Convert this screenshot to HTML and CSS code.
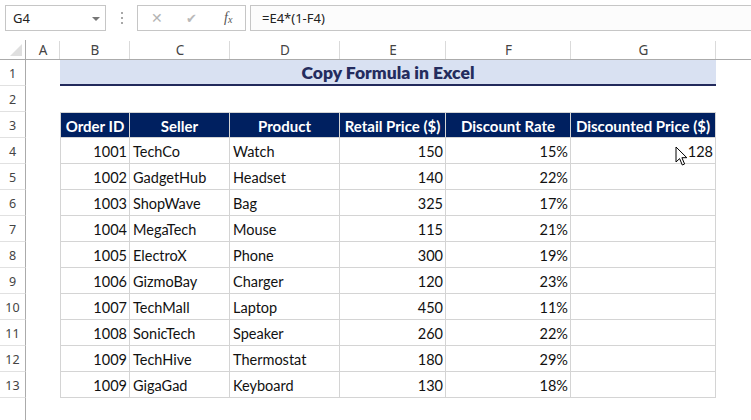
FILE: index.html
```html
<!DOCTYPE html>
<html lang="en">
<head>
    <meta charset="UTF-8">
    <title>Copy Formula in Excel</title>
    <link rel="stylesheet" href="styles.css">
</head>
<body>
    <div class="formula-bar">
        <div class="name-box">
            <span>G4</span>
            <span class="caret"></span>
        </div>
        <div class="grip"><i></i><i></i><i></i></div>
        <div class="fx-buttons">
            <span class="btn-x">&#x2715;</span>
            <span class="btn-ok">&#x2714;</span>
            <span class="btn-fx">f<sub>x</sub></span>
        </div>
        <div class="formula-input">=E4*(1-F4)</div>
    </div>

    <div class="sheet">
        <!-- column headings -->
        <div class="corner"><span class="tri"></span></div>
        <div class="col-head">A</div>
        <div class="col-head">B</div>
        <div class="col-head">C</div>
        <div class="col-head">D</div>
        <div class="col-head">E</div>
        <div class="col-head">F</div>
        <div class="col-head">G</div>
        <div class="col-head last"></div>

        <!-- row 1 -->
        <div class="row-head">1</div>
        <div class="blank"></div>
        <div class="title">Copy Formula in Excel</div>
        <div class="blank"></div>

        <!-- row 2 -->
        <div class="row-head">2</div>
        <div class="blank span-all"></div>

        <!-- row 3 -->
        <div class="row-head">3</div>
        <div class="blank"></div>
        <div class="th first">Order ID</div>
        <div class="th">Seller</div>
        <div class="th">Product</div>
        <div class="th">Retail Price ($)</div>
        <div class="th">Discount Rate</div>
        <div class="th">Discounted Price ($)</div>
        <div class="blank"></div>
    </div>

    <svg class="pointer" width="14" height="21" viewBox="0 0 14 21">
        <path d="M1 1 L1 16 L4.6 12.6 L7.3 19 L9.6 18 L6.9 11.7 L11.8 11.7 Z" fill="#fff" stroke="#000" stroke-width="1" stroke-linejoin="miter"/>
    </svg>

    <script src="sheet.js"></script>
</body>
</html>
```

FILE: sheet.js
```js
// isi baris data (baris 4 - 13)
const orders = [
    [1001, 'TechCo', 'Watch', 150, '15%', 128],
    [1002, 'GadgetHub', 'Headset', 140, '22%', ''],
    [1003, 'ShopWave', 'Bag', 325, '17%', ''],
    [1004, 'MegaTech', 'Mouse', 115, '21%', ''],
    [1005, 'ElectroX', 'Phone', 300, '19%', ''],
    [1006, 'GizmoBay', 'Charger', 120, '23%', ''],
    [1007, 'TechMall', 'Laptop', 450, '11%', ''],
    [1008, 'SonicTech', 'Speaker', 260, '22%', ''],
    [1009, 'TechHive', 'Thermostat', 180, '29%', ''],
    [1009, 'GigaGad', 'Keyboard', 130, '18%', '']
];

const sheet = document.querySelector('.sheet');

function cell(cls, text) {
    const div = document.createElement('div');
    div.className = cls;
    div.textContent = text;
    sheet.appendChild(div);
}

orders.forEach((row, i) => {
    cell('row-head', i + 4);
    cell('blank', '');
    cell('td first num', row[0]);
    cell('td', row[1]);
    cell('td', row[2]);
    cell('td num', row[3]);
    cell('td num', row[4]);
    cell('td num', row[5]);
    cell('blank', '');
});

cell('row-head tail', '');
cell('blank span-all', '');
```

FILE: styles.css
```css
* {
    margin: 0;
    padding: 0;
    box-sizing: border-box;
}

body {
    background: #fff;
    width: 751px;
    height: 420px;
    overflow: hidden;
    position: relative;
    font-family: 'Lato', 'Liberation Sans', sans-serif;
}

/* ---------- formula bar ---------- */
.formula-bar {
    height: 40px;
    padding-top: 5px;
    display: flex;
    align-items: flex-start;
}

.name-box {
    margin-left: 5px;
    width: 101px;
    height: 26px;
    border: 1px solid #c6c6c6;
    display: flex;
    align-items: center;
    justify-content: space-between;
    padding: 0 5px 0 7px;
    font-family: 'Noto Sans', sans-serif;
    font-size: 13px;
    color: #222;
}

.caret {
    width: 0;
    height: 0;
    border-left: 4px solid transparent;
    border-right: 4px solid transparent;
    border-top: 4px solid #777;
    margin-top: 1px;
}

.grip {
    width: 31px;
    height: 26px;
    display: flex;
    flex-direction: column;
    align-items: center;
    justify-content: center;
    gap: 3px;
}

.grip i {
    display: block;
    width: 2px;
    height: 2px;
    background: #a8a8a8;
}

.fx-buttons {
    width: 109px;
    height: 26px;
    border: 1px solid #c6c6c6;
    display: flex;
    align-items: center;
    padding-left: 13px;
}

.btn-x {
    color: #b4b4b4;
    font-size: 14px;
    width: 35px;
    font-family: 'DejaVu Sans', sans-serif;
}

.btn-ok {
    color: #b9b9b9;
    font-size: 13px;
    width: 38px;
    font-family: 'DejaVu Sans', sans-serif;
}

.btn-fx {
    font-family: 'Liberation Serif', serif;
    font-style: italic;
    font-size: 14px;
    color: #555;
}

.btn-fx sub {
    font-size: 10px;
    vertical-align: -1px;
}

.formula-input {
    margin-left: 4px;
    flex: 1;
    height: 26px;
    border: 1px solid #c6c6c6;
    border-right: none;
    background: #fcfcfc;
    padding-left: 11px;
    line-height: 24px;
    font-family: 'Noto Sans', sans-serif;
    font-size: 13px;
    color: #222;
}

/* ---------- worksheet ---------- */
.sheet {
    display: grid;
    grid-template-columns: 26px 34px 70px 100px 110px 106px 125px 145px 1fr;
    grid-template-rows: 20px;
    grid-auto-rows: 26px;
}

.corner {
    border-right: 1px solid #ababab;
    border-bottom: 1px solid #ababab;
    position: relative;
}

.corner .tri {
    position: absolute;
    right: 3px;
    bottom: 3px;
    width: 0;
    height: 0;
    border-left: 12px solid transparent;
    border-bottom: 12px solid #dfdfdf;
}

.col-head {
    border-bottom: 1px solid #ababab;
    display: flex;
    align-items: center;
    justify-content: center;
    font-family: 'Noto Sans', sans-serif;
    font-size: 13.5px;
    color: #444;
    position: relative;
}

.col-head::after {
    content: '';
    position: absolute;
    right: 0;
    top: 1px;
    bottom: 0;
    width: 1px;
    background: #dadada;
}

.col-head.last::after {
    display: none;
}

.row-head {
    border-right: 1px solid #ababab;
    border-bottom: 1px solid #e1e1e1;
    display: flex;
    align-items: center;
    justify-content: center;
    padding-top: 2px;
    font-family: 'Noto Sans', sans-serif;
    font-size: 12.5px;
    color: #444;
}

.row-head.tail {
    border-bottom: none;
    height: 30px;
}

.span-all {
    grid-column: 2 / -1;
}

.title {
    grid-column: 3 / span 6;
    background: #d9e1f2;
    border-bottom: 2px solid #222a5c;
    display: flex;
    align-items: center;
    justify-content: center;
    padding-top: 1px;
    font-weight: 800;
    font-size: 17.5px;
    color: #242c5e;
}

.th {
    background: #002060;
    color: #fff;
    font-weight: 700;
    font-size: 15px;
    display: flex;
    align-items: center;
    justify-content: center;
    border-top: 1px solid #d4d4d4;
    border-right: 1px solid #d4d4d4;
    border-bottom: 1px solid #d4d4d4;
    padding-top: 1px;
}

.td {
    border-right: 1px solid #d4d4d4;
    border-bottom: 1px solid #d4d4d4;
    display: flex;
    align-items: center;
    padding: 2px 2px 0 3px;
    font-size: 14.5px;
    color: #111;
}

.first {
    border-left: 1px solid #d4d4d4;
}

.num {
    justify-content: flex-end;
}

.pointer {
    position: absolute;
    left: 675px;
    top: 146px;
}
```
